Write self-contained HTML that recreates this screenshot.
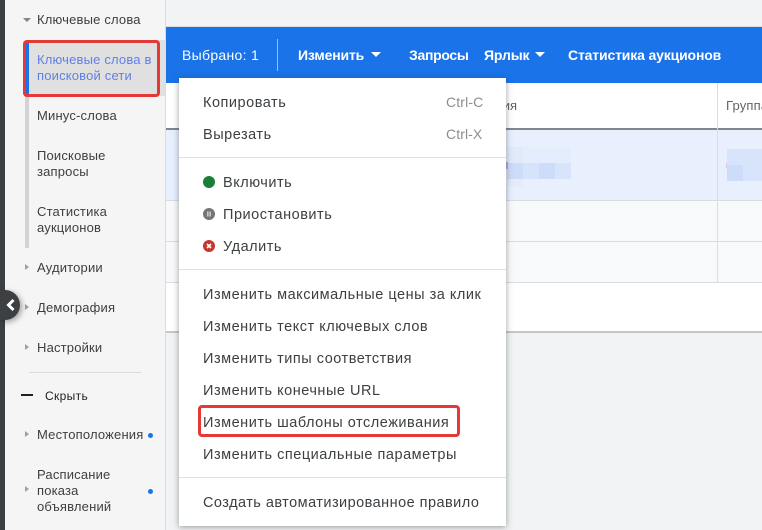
<!DOCTYPE html>
<html><head><meta charset="utf-8">
<style>
html,body{margin:0;padding:0;width:762px;height:530px;overflow:hidden;background:#f1f3f4}
body{position:relative;font-family:"Liberation Sans","Noto Sans CJK SC",sans-serif;font-size:13px;color:#3c4043}
.b{position:absolute}
.t{position:absolute;white-space:nowrap;line-height:16px;font-size:13px;letter-spacing:.18px}
.m{position:absolute;left:203px;margin-top:1px;white-space:nowrap;line-height:20px;font-size:14.5px;letter-spacing:.52px;color:#3c4043}
.w{position:absolute;white-space:nowrap;line-height:20px;font-size:14px;font-weight:bold;letter-spacing:-.15px;color:#fff}
.ar{position:absolute;width:0;height:0;border-top:3.5px solid transparent;border-bottom:3.5px solid transparent;border-left:4.5px solid #9aa0a6}
.dn{position:absolute;width:0;height:0;border-left:5.5px solid transparent;border-right:5.5px solid transparent;border-top:5.5px solid #fff}
.d{position:absolute;width:5px;height:5px;border-radius:50%;background:#1a73e8}
</style></head><body>
<div class="b" style="left:0;top:0;width:5px;height:530px;background:#3c4043"></div>
<div class="b" style="left:5px;top:0;width:160px;height:530px;background:#f5f5f5"></div>
<div class="b" style="left:165px;top:0;width:1px;height:530px;background:#dadce0"></div>

<!-- Sidebar -->
<div class="dn" style="left:23px;top:18px;border-left-width:4px;border-right-width:4px;border-top-width:4px;border-top-color:#80868b"></div>
<div class="t" style="left:37px;top:12px">Ключевые слова</div>
<div class="b" style="left:25px;top:40px;width:4px;height:208px;background:#d3d3d3"></div>
<div class="b" style="left:25px;top:40px;width:140px;height:56px;background:#e0e0e0"></div>
<div class="b" style="left:25px;top:41px;width:4px;height:55px;background:#1a73e8"></div>
<div class="t" style="left:37px;top:52px;color:#5f7fe8">Ключевые слова в</div>
<div class="t" style="left:37px;top:68px;color:#5f7fe8">поисковой сети</div>
<div class="b" style="left:23px;top:40px;width:131px;height:51px;border:3px solid #e53935;border-radius:4px"></div>
<div class="t" style="left:37px;top:108px">Минус-слова</div>
<div class="t" style="left:37px;top:148px">Поисковые</div>
<div class="t" style="left:37px;top:164px">запросы</div>
<div class="t" style="left:37px;top:204px">Статистика</div>
<div class="t" style="left:37px;top:220px">аукционов</div>
<div class="ar" style="left:25px;top:264px"></div>
<div class="t" style="left:37px;top:260px">Аудитории</div>
<div class="ar" style="left:25px;top:304px"></div>
<div class="t" style="left:37px;top:300px">Демография</div>
<div class="ar" style="left:25px;top:344px"></div>
<div class="t" style="left:37px;top:340px">Настройки</div>
<div class="b" style="left:29px;top:372px;width:112px;height:1px;background:#dadce0"></div>
<div class="b" style="left:21px;top:394px;width:12px;height:2px;background:#202124"></div>
<div class="t" style="left:45px;top:388px;font-size:12px;letter-spacing:.35px;color:#202124">Скрыть</div>
<div class="ar" style="left:25px;top:431px"></div>
<div class="t" style="left:37px;top:427px">Местоположения</div>
<div class="d" style="left:148px;top:433px"></div>
<div class="ar" style="left:25px;top:486px"></div>
<div class="t" style="left:37px;top:467px">Расписание</div>
<div class="t" style="left:37px;top:483px">показа</div>
<div class="t" style="left:37px;top:499px">объявлений</div>
<div class="d" style="left:148px;top:489px"></div>

<!-- Collapse button -->
<div class="b" style="left:0;top:290px;width:20px;height:30px;background:#3c4043;border-radius:0 15px 15px 0;box-shadow:2px 2px 6px rgba(0,0,0,.35)"></div>
<svg class="b" style="left:5px;top:298px" width="12" height="14" viewBox="0 0 12 14"><path d="M8.5 2L3.5 7l5 5" fill="none" stroke="#fff" stroke-width="3"/></svg>

<!-- Main -->
<div class="b" style="left:166px;top:26px;width:596px;height:1px;background:#dadce0"></div>
<div class="b" style="left:166px;top:83px;width:596px;height:248px;background:#fff"></div>
<div class="b" style="left:166px;top:331px;width:596px;height:2px;background:#c4c6c9"></div>
<div class="b" style="left:166px;top:128px;width:596px;height:2px;background:#80868b"></div>
<div class="b" style="left:166px;top:130px;width:596px;height:70px;background:#e8f0fe"></div>
<div class="b" style="left:166px;top:200px;width:596px;height:1px;background:#dadce0"></div>
<div class="b" style="left:166px;top:201px;width:596px;height:40px;background:#f8f9fa"></div>
<div class="b" style="left:166px;top:241px;width:596px;height:1px;background:#dadce0"></div>
<div class="b" style="left:166px;top:242px;width:596px;height:40px;background:#f8f9fa"></div>
<div class="b" style="left:166px;top:282px;width:596px;height:1px;background:#dadce0"></div>
<div class="b" style="left:717px;top:83px;width:1px;height:199px;background:#dadce0"></div>
<div class="t" style="left:500px;top:98px;color:#5f6368;width:17px;overflow:hidden;direction:rtl;letter-spacing:0">ия</div>
<div class="t" style="left:726px;top:98px;color:#5f6368">Группа</div>

<!-- Blur blocks -->
<div class="b" style="left:507px;top:147px;width:16px;height:16px;background:#e2eafa"></div>
<div class="b" style="left:523px;top:147px;width:48px;height:16px;background:#e4edfd"></div>
<div class="b" style="left:507px;top:163px;width:16px;height:16px;background:#cddcf8"></div>
<div class="b" style="left:523px;top:163px;width:16px;height:16px;background:#d6e3fb"></div>
<div class="b" style="left:539px;top:163px;width:16px;height:16px;background:#cddcf8"></div>
<div class="b" style="left:555px;top:163px;width:16px;height:16px;background:#d8e4fc"></div>
<div class="b" style="left:507px;top:179px;width:16px;height:7px;background:#e4ebfa"></div>
<div class="b" style="left:506px;top:162px;width:2px;height:7px;background:#b9a5e8"></div>
<div class="b" style="left:727px;top:149px;width:35px;height:16px;background:#d8e4fc"></div>
<div class="b" style="left:727px;top:165px;width:16px;height:16px;background:#cddcf8"></div>
<div class="b" style="left:743px;top:165px;width:19px;height:16px;background:#d8e4fb"></div>
<div class="b" style="left:726px;top:163px;width:1px;height:5px;background:#e8c4e8"></div>

<!-- Blue bar -->
<div class="b" style="left:166px;top:27px;width:596px;height:56px;background:#1a73e8"></div>
<div class="b" style="left:277px;top:39px;width:1px;height:32px;background:rgba(255,255,255,.55)"></div>
<div class="t" style="left:182px;top:45px;font-size:14px;line-height:20px;letter-spacing:.3px;color:#fff">Выбрано: 1</div>
<div class="w" style="left:298px;top:45px">Изменить</div>
<div class="dn" style="left:371px;top:52px"></div>
<div class="w" style="left:409px;top:45px;letter-spacing:-.3px">Запросы</div>
<div class="w" style="left:484px;top:45px">Ярлык</div>
<div class="dn" style="left:535px;top:52px"></div>
<div class="w" style="left:568px;top:45px">Статистика аукционов</div>

<!-- Menu -->
<div class="b" style="left:179px;top:78px;width:327px;height:448px;background:#fff;box-shadow:0 1px 6px rgba(60,64,67,.5)"></div>
<div class="m" style="top:92px">Копировать</div>
<div class="m" style="left:446px;top:92px;margin-top:0;color:#8a8e92;font-size:14px;letter-spacing:.15px">Ctrl-C</div>
<div class="m" style="top:124px">Вырезать</div>
<div class="m" style="left:446px;top:124px;margin-top:0;color:#8a8e92;font-size:14px;letter-spacing:.1px">Ctrl-X</div>
<div class="b" style="left:179px;top:157px;width:327px;height:1px;background:#e0e0e0"></div>
<div class="b" style="left:203px;top:176px;width:12px;height:12px;border-radius:50%;background:#188038"></div>
<div class="m" style="left:223px;top:172px">Включить</div>
<svg class="b" style="left:203px;top:208px" width="12" height="12" viewBox="0 0 12 12"><circle cx="6" cy="6" r="6" fill="#757575"/><path d="M4.2 3.5h1.3v5H4.2zM6.5 3.5h1.3v5H6.5z" fill="#ddd"/></svg>
<div class="m" style="left:223px;top:204px">Приостановить</div>
<svg class="b" style="left:203px;top:240px" width="12" height="12" viewBox="0 0 12 12"><circle cx="6" cy="6" r="6" fill="#c5372c"/><path d="M4 4l4 4M8 4l-4 4" stroke="#fff" stroke-width="1.6"/></svg>
<div class="m" style="left:223px;top:236px">Удалить</div>
<div class="b" style="left:179px;top:269px;width:327px;height:1px;background:#e0e0e0"></div>
<div class="m" style="top:284px">Изменить максимальные цены за клик</div>
<div class="m" style="top:316px">Изменить текст ключевых слов</div>
<div class="m" style="top:348px">Изменить типы соответствия</div>
<div class="m" style="top:380px">Изменить конечные URL</div>
<div class="m" style="top:412px">Изменить шаблоны отслеживания</div>
<div class="b" style="left:198px;top:405px;width:256px;height:26px;border:3px solid #e53935;border-radius:4px"></div>
<div class="m" style="top:444px">Изменить специальные параметры</div>
<div class="b" style="left:179px;top:477px;width:327px;height:1px;background:#e0e0e0"></div>
<div class="m" style="top:492px;letter-spacing:.46px">Создать автоматизированное правило</div>
</body></html>
